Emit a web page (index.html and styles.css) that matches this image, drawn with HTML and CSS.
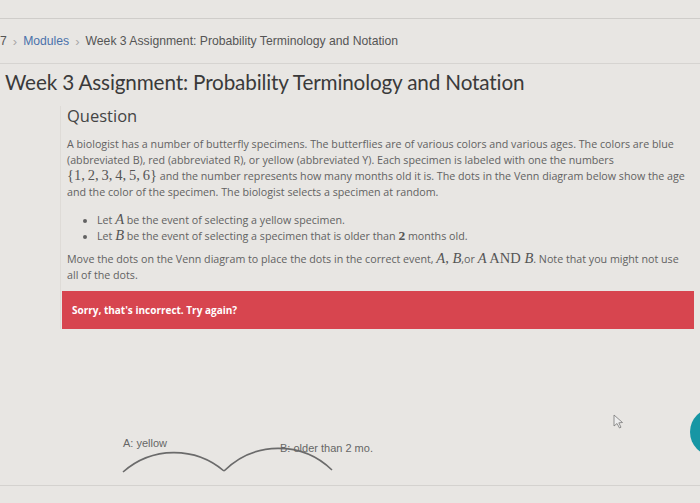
FILE: index.html
```html
<!DOCTYPE html>
<html>
<head>
<meta charset="utf-8">
<link rel="stylesheet" href="styles.css">
</head>
<body>
<div class="topbar"></div>
<nav class="crumbs">
  <span class="crumb">7</span>
  <span class="sep">&rsaquo;</span>
  <span class="crumb link">Modules</span>
  <span class="sep">&rsaquo;</span>
  <span class="crumb">Week 3 Assignment: Probability Terminology and Notation</span>
</nav>
<h1 class="title">Week 3 Assignment: Probability Terminology and Notation</h1>
<div class="panel">
  <h2 class="qhead">Question</h2>
  <p class="text">A biologist has a number of butterfly specimens. The butterflies are of various colors and various ages. The colors are blue (abbreviated B), red (abbreviated R), or yellow (abbreviated Y). Each specimen is labeled with one the numbers <span class="math set">{1,&thinsp;2,&thinsp;3,&thinsp;4,&thinsp;5,&thinsp;6}</span> and the number represents how many months old it is. The dots in the Venn diagram below show the age and the color of the specimen. The biologist selects a specimen at random.</p>
  <ul class="list">
    <li>Let <span class="math var">A</span> be the event of selecting a yellow specimen.</li>
    <li>Let <span class="math var">B</span> be the event of selecting a specimen that is older than <span class="math num">2</span> months old.</li>
  </ul>
  <p class="text move">Move the dots on the Venn diagram to place the dots in the correct event, <span class="math var">A</span><span class="math">, </span><span class="math var">B</span>,or <span class="math var">A</span><span class="math"> AND </span><span class="math var">B</span>. Note that you might not use all of the dots.</p>
  <div class="alert">Sorry, that's incorrect. Try again?</div>
</div>
<div class="venn">
  <svg class="canvas" width="700" height="156" viewBox="0 0 700 156">
    <path d="M123,143 A77,77 0 0 1 224,142" fill="none" stroke="#6b6b6b" stroke-width="1.6"/>
    <path d="M224,142 A77,77 0 0 1 332,141" fill="none" stroke="#6b6b6b" stroke-width="1.6"/>
    <text x="123" y="118" class="lbl">A: yellow</text>
    <text x="280" y="123" class="lbl">B: older than 2 mo.</text>
    <path d="M614,86 L614,97 L617,94.5 L619.5,99 L621,98.2 L618.8,93.8 L622.5,93.5 Z" fill="#eeeeee" stroke="#777" stroke-width="0.8"/>
    <circle cx="714" cy="103" r="24" fill="#1796a4"/>
  </svg>
</div>
</body>
</html>
```
FILE: styles.css
```css
html, body {
  margin: 0;
  padding: 0;
}
body {
  width: 700px;
  height: 503px;
  overflow: hidden;
  background: #e8e6e3;
  font-family: "Open Sans", "Liberation Sans", sans-serif;
}
.topbar {
  height: 18px;
  border-bottom: 1px solid #cfcdca;
}
.crumbs {
  height: 44px;
  display: flex;
  align-items: center;
  gap: 6px;
  padding-left: 0;
  border-bottom: 1px solid #d6d4d1;
  font-family: "Liberation Sans", Arial, sans-serif;
  font-size: 12.2px;
  color: #555;
}
.crumbs .link {
  color: #4b72ab;
}
.crumbs .sep {
  color: #a8a8a8;
  font-size: 13px;
}
.title {
  margin: 5px 0 0 0;
  padding-left: 5px;
  font-family: Lato, "Open Sans", sans-serif;
  font-weight: 400;
  font-size: 20.7px;
  line-height: 26px;
  color: #3a3a3a;
  letter-spacing: -0.15px;
}
.panel {
  margin: 0 6px 0 60px;
  border-left: 1px solid #dedbd7;
  padding-left: 1px;
}
.qhead {
  margin: 11px 0 0 5px;
  font-family: "Open Sans", sans-serif;
  font-weight: 400;
  font-size: 16.5px;
  line-height: 20px;
  color: #444;
}
.text {
  margin: 10px 3px 0 5px;
  font-size: 10.7px;
  line-height: 16px;
  color: #626262;
}
.math {
  font-family: "Liberation Serif", serif;
  color: #555;
  line-height: 0;
}
.set {
  font-size: 14.5px;
  white-space: nowrap;
}
.var {
  font-style: italic;
  font-size: 14.5px;
}
.num {
  font-size: 13.5px;
  font-weight: 700;
}
.move .math {
  font-size: 14.5px;
}
.list {
  margin: 12px 0 0 0;
  padding-left: 35px;
  font-size: 10.7px;
  line-height: 16px;
  color: #626262;
}
.move {
  margin-top: 7px;
}
.alert {
  margin-top: 8px;
  height: 38px;
  display: flex;
  align-items: center;
  padding-left: 10px;
  background: #d7454f;
  color: #fff;
  font-weight: 700;
  font-size: 10px;
}
.venn {
  height: 156px;
  border-bottom: 1px solid #d4d2cf;
}
.canvas {
  display: block;
}
.lbl {
  font-family: "Liberation Sans", Arial, sans-serif;
  font-size: 11px;
  fill: #666;
}
```
